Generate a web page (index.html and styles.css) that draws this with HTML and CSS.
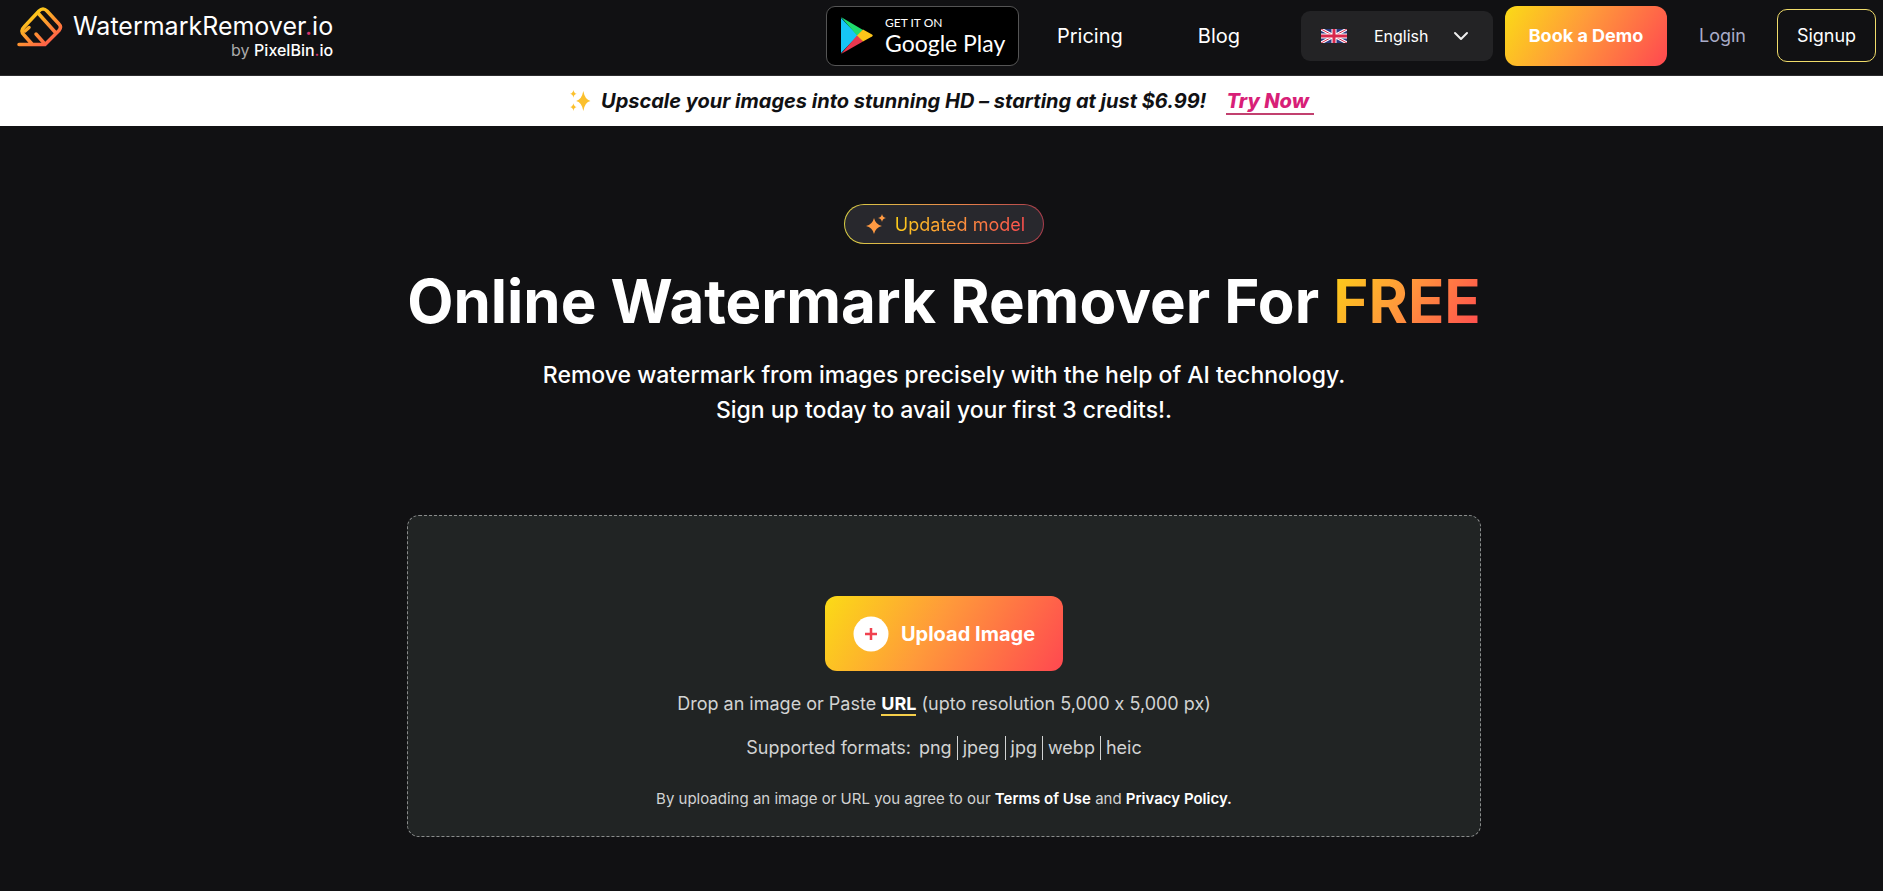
FILE: index.html
```html
<!DOCTYPE html>
<html lang="en">
<head>
  <meta charset="UTF-8">
  <meta name="viewport" content="width=device-width, initial-scale=1.0">
  <title>WatermarkRemover.io</title>
  <link rel="stylesheet" href="styles.css">
</head>
<body>
  <header class="navbar">
    <a class="logo" href="#">
      <svg class="logo-icon" viewBox="0 0 48 40" width="48" height="40" fill="none" stroke="url(#logoGradient)" stroke-width="3.500" stroke-linecap="round" stroke-linejoin="round">
        <defs>
          <linearGradient id="logoGradient" gradientUnits="userSpaceOnUse" x1="14" y1="4" x2="36" y2="36">
            <stop offset="0" stop-color="#fcd514"/>
            <stop offset="1" stop-color="#ff5a4a"/>
          </linearGradient>
        </defs>
        <path d="M3 37.500H29L43 23.500Q46 20 43 17L31 4Q27 0 23 4L8 20Q4 24 8 28L16 37"/>
        <path d="M22 6L39 25M9 24L13 20.500M20 27L28 36"/>
      </svg>
      <span class="logo-text">
        <span class="logo-name">WatermarkRemover<span class="dot">.</span>io</span>
        <span class="logo-by">by <b>PixelBin<span class="dot">.</span>io</b></span>
      </span>
    </a>

    <nav class="nav-links">
      <a class="play-badge" href="#">
        <svg viewBox="0 0 33 37" width="33" height="37">
          <path d="M1 1V36L18 18.500Z" fill="#16c6f5"/>
          <path d="M1 0L23 13L17.500 19Z" fill="#1fdc6d"/>
          <path d="M1 37L23 24.500L17.500 18Z" fill="#e8374f"/>
          <path d="M23 12.500L32 17.500Q33.500 18.500 32 19.500L23 24.500L17 18.500Z" fill="#fcc419"/>
        </svg>
        <span class="play-text">
          <span class="play-small">GET IT ON</span>
          <span class="play-big">Google Play</span>
        </span>
      </a>
      <a class="nav-link" href="#">Pricing</a>
      <a class="nav-link" href="#">Blog</a>
    </nav>

    <div class="nav-actions">
      <label class="language">
        <svg class="flag" viewBox="0 0 26 14" width="26" height="14">
          <path d="M0 0H26V14H0Z" fill="#2b3a80"/>
          <path d="M0 0L26 14M26 0L0 14" stroke="#fff" stroke-width="3"/>
          <path d="M0 0L26 14M26 0L0 14" stroke="#d8284c" stroke-width="1"/>
          <path d="M13 0V14M0 7H26" stroke="#fff" stroke-width="5"/>
          <path d="M13 0V14M0 7H26" stroke="#d8284c" stroke-width="3"/>
        </svg>
        <select aria-label="Language">
          <option>English</option>
        </select>
        <svg class="chevron" viewBox="0 0 16 10" width="16" height="10" fill="none" stroke="#eee" stroke-width="2" stroke-linecap="round" stroke-linejoin="round">
          <path d="M2 2L8 8L14 2"/>
        </svg>
      </label>
      <button class="btn-demo" type="button">Book a Demo</button>
      <a class="login" href="#">Login</a>
      <button class="btn-signup" type="button">Signup</button>
    </div>
  </header>

  <div class="banner">
    <svg viewBox="0 0 20 20" width="22" height="22" fill="#fbc02d">
      <path d="M13 1Q14.500 9 19.500 10Q14.500 11 13 19Q11.500 11 6.500 10Q11.500 9 13 1Z"/>
      <path d="M4 0Q4.500 3 7 3.500Q4.500 4 4 7Q3.500 4 1 3.500Q3.500 3 4 0Z"/>
      <path d="M4 12Q4.500 15 7 15.500Q4.500 16 4 19Q3.500 16 1 15.500Q3.500 15 4 12Z"/>
    </svg>
    <span class="banner-text">Upscale your images into stunning HD – starting at just $6.99!</span>
    <a class="banner-link" href="#">Try Now</a>
  </div>

  <main class="hero">
    <div class="pill">
      <svg viewBox="0 0 20 20" width="20" height="20" fill="#ff9a42">
        <path d="M8 4Q9.500 10.500 16 12Q9.500 13.500 8 20Q6.500 13.500 0 12Q6.500 10.500 8 4Z"/>
        <path d="M16 0Q16.600 3.400 20 4Q16.600 4.600 16 8Q15.400 4.600 12 4Q15.400 3.400 16 0Z"/>
      </svg>
      <span class="gradient-text">Updated model</span>
    </div>

    <h1>Online Watermark Remover For <span class="gradient-text">FREE</span></h1>
    <p class="subtitle">Remove watermark from images precisely with the help of AI technology.<br>Sign up today to avail your first 3 credits!.</p>

    <section class="upload-box">
      <button class="btn-upload" type="button">
        <svg viewBox="0 0 36 36" width="36" height="36">
          <circle cx="18" cy="18" r="17.500" fill="#fff"/>
          <path d="M18 12V24M12 18H24" stroke="#f0414f" stroke-width="2.500"/>
        </svg>
        Upload Image
      </button>
      <p class="drop-text">Drop an image or Paste <a class="url" href="#">URL</a> (upto resolution 5,000 x 5,000 px)</p>
      <div class="formats">
        <span>Supported formats:</span>
        <ul>
          <li>png</li>
          <li>jpeg</li>
          <li>jpg</li>
          <li>webp</li>
          <li>heic</li>
        </ul>
      </div>
      <p class="terms">By uploading an image or URL you agree to our <a href="#">Terms of Use</a> and <a href="#">Privacy Policy.</a></p>
    </section>
  </main>
</body>
</html>
```
FILE: styles.css
```css
* {
  box-sizing: border-box;
}
body {
  margin: 0;
  font-family: Inter, "Liberation Sans", sans-serif;
  font-variant-ligatures: no-contextual;
  background: #111113;
  color: #fff;
}
a {
  color: inherit;
  text-decoration: none;
}
button, select {
  font-family: inherit;
  cursor: pointer;
}
p, h1, ul {
  margin: 0;
  padding: 0;
}

/* navbar */
.navbar {
  display: flex;
  align-items: center;
  min-height: 76px;
  padding: 0 7px 4px 16px;
  border-bottom: 1px solid #2c2c2e;
}
.logo {
  display: flex;
  align-self: flex-start;
  gap: 9px;
  margin-right: auto;
  padding-top: 7px;
}
.logo-text {
  display: flex;
  flex-direction: column;
  align-items: flex-end;
  padding-top: 4px;
}
.logo-name {
  font-size: 25px;
  line-height: 30px;
}
.logo-by {
  font-size: 16px;
  line-height: 18px;
  color: #aaa;
}
.logo-by b {
  font-weight: 500;
  color: #fff;
}
.dot {
  color: #d6336c;
}
.nav-links {
  display: flex;
  align-items: center;
}
.play-badge {
  display: flex;
  align-items: center;
  gap: 12px;
  width: 193px;
  height: 60px;
  padding-left: 13px;
  margin-right: 38px;
  background: #000;
  border: 1px solid #555;
  border-radius: 9px;
}
.play-text {
  display: flex;
  flex-direction: column;
  font-family: Lato, sans-serif;
}
.play-small {
  font-size: 12px;
  line-height: 14px;
}
.play-big {
  font-size: 23px;
  line-height: 26px;
}
.nav-link {
  font-size: 20px;
}
.nav-link + .nav-link {
  margin: 0 61px 0 75px;
}
.nav-actions {
  display: flex;
  align-items: center;
}
.language {
  display: flex;
  align-items: center;
  position: relative;
  width: 192px;
  height: 50px;
  margin-right: 12px;
  background: #232325;
  border-radius: 9px;
}
.flag {
  position: absolute;
  left: 20px;
  pointer-events: none;
}
.chevron {
  position: absolute;
  right: 24px;
  pointer-events: none;
}
.language select {
  width: 100%;
  height: 100%;
  padding: 0 0 0 73px;
  appearance: none;
  background: none;
  border: 0;
  color: #fff;
  font-size: 16px;
}
.btn-demo, .btn-upload {
  border: 0;
  border-radius: 12px;
  background: linear-gradient(121deg, #fbdb16, #ff9a3a 45%, #ff4850);
  color: #fff;
  font-weight: 700;
}
.btn-demo {
  width: 162px;
  height: 60px;
  margin-right: 32px;
  padding: 0;
  font-size: 18px;
}
.login {
  margin-right: 31px;
  color: #a9acc8;
  font-size: 18px;
}
.btn-signup {
  width: 99px;
  height: 53px;
  padding: 0;
  background: none;
  border: 1px solid #f0dc6a;
  border-radius: 10px;
  color: #fff;
  font-size: 18px;
}

/* promo banner */
.banner {
  display: flex;
  align-items: center;
  justify-content: center;
  min-height: 50px;
  background: #fff;
  color: #111113;
  font-size: 20px;
  font-style: italic;
  font-weight: 700;
}
.banner-text {
  margin: 0 20px 0 10px;
}
.banner-link {
  padding: 2px 5px 0 0;
  border-bottom: 2px solid #c2406f;
  color: #d81f78;
  font-weight: 800;
}

/* hero */
.hero {
  display: flex;
  flex-direction: column;
  align-items: center;
  padding: 78px 0 52px 5px;
}
.pill {
  display: flex;
  align-items: center;
  gap: 9px;
  height: 40px;
  padding: 0 18px 0 21px;
  border: 1px solid transparent;
  border-radius: 20px;
  background: linear-gradient(#28282d, #28282d) padding-box, linear-gradient(90deg, #d8ce45, #e8824a 60%, #a83c4c) border-box;
  font-size: 18px;
}
.gradient-text {
  background: linear-gradient(121deg, #fbd016, #ff9a3a 45%, #ff4850);
  -webkit-background-clip: text;
  background-clip: text;
  color: transparent;
}
h1 {
  margin-top: 21px;
  font-size: 60px;
  line-height: 72px;
  font-weight: 700;
}
.subtitle {
  margin-top: 21px;
  text-align: center;
  font-size: 23px;
  line-height: 35px;
  font-weight: 500;
}
.upload-box {
  display: flex;
  flex-direction: column;
  align-items: center;
  width: 90%;
  max-width: 1074px;
  margin-top: 87px;
  padding: 80px 0 27px;
  background: #212424;
  border: 1px dashed #8a8c8c;
  border-radius: 12px;
  color: #d2d3d3;
}
.btn-upload {
  display: flex;
  align-items: center;
  justify-content: center;
  gap: 12px;
  width: 238px;
  height: 75px;
  font-size: 20px;
}
.drop-text, .formats {
  font-size: 18px;
  line-height: 24px;
}
.drop-text {
  margin-top: 21px;
}
.url {
  border-bottom: 2px solid #f5cf4a;
  color: #fff;
  font-weight: 700;
}
.formats {
  display: flex;
  gap: 8px;
  margin-top: 20px;
}
.formats ul {
  display: flex;
  list-style: none;
}
.formats li + li {
  margin-left: 5px;
  padding-left: 5px;
  border-left: 1px solid #d2d3d3;
}
.terms {
  margin-top: 29px;
  font-size: 15px;
  line-height: 20px;
}
.terms a {
  color: #fff;
  font-weight: 600;
}
```
